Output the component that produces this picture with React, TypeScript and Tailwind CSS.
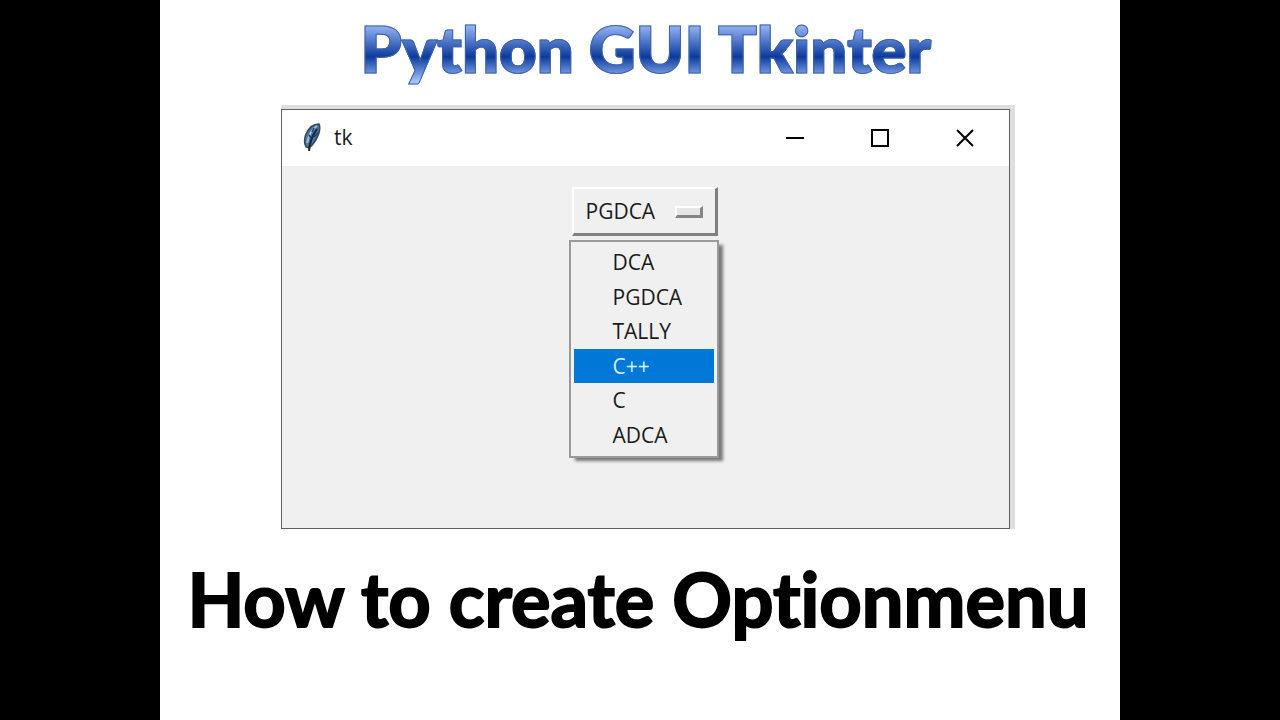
import { useState } from "react";

const courses = ["DCA", "PGDCA", "TALLY", "C++", "C", "ADCA"];

function FeatherIcon() {
  return (
    <svg width="20" height="30" viewBox="0 0 20 30" aria-hidden="true">
      <path
        d="M17 1C12 1 7 4 4 11C2 16 2 20 4 24L7 25C12 21 15 16 17 10C18 6 18 3 17 1Z"
        fill="#4674a6"
        stroke="#3a434d"
        strokeWidth="1.5"
      />
      <path d="M15 3C10 6 7 11 5 20" fill="none" stroke="#9dbddb" strokeWidth="2" />
      <path d="M15 6C11 12 8 17 7 28" fill="none" stroke="#1c242e" strokeWidth="2" />
      <path d="M12 5L10 9M16 10L12 14M7 12L9 15" stroke="#1e3f66" strokeWidth="1.5" />
    </svg>
  );
}

function TitleBar() {
  return (
    <div className="flex h-14 items-center bg-white pr-0.5 pl-5">
      <FeatherIcon />
      <span className="ml-3">tk</span>
      <div className="ml-auto flex h-full">
        <button type="button" aria-label="Minimize" className="flex w-[85px] items-center justify-center">
          <svg width="18" height="18" viewBox="0 0 18 18">
            <path d="M0 9H18" stroke="#000" strokeWidth="2" />
          </svg>
        </button>
        <button type="button" aria-label="Maximize" className="flex w-[85px] items-center justify-center">
          <svg width="18" height="18" viewBox="0 0 18 18">
            <rect x="1" y="1" width="16" height="16" fill="none" stroke="#000" strokeWidth="2" />
          </svg>
        </button>
        <button type="button" aria-label="Close" className="flex w-[85px] items-center justify-center">
          <svg width="18" height="18" viewBox="0 0 18 18">
            <path d="M1 1L17 17M17 1L1 17" stroke="#000" strokeWidth="2" />
          </svg>
        </button>
      </div>
    </div>
  );
}

function OptionMenu() {
  const [value, setValue] = useState("PGDCA");
  const [active, setActive] = useState("C++");

  return (
    <div className="relative">
      <button
        type="button"
        aria-haspopup="menu"
        aria-expanded="true"
        className="flex h-[49px] w-[146px] items-center justify-between border-t-2 border-r-3 border-b-3 border-l-2 border-t-white border-r-[#808080] border-b-[#808080] border-l-white bg-[#f0f0f0] px-3 pt-0.5"
      >
        <span>{value}</span>
        <span className="h-3 w-7 border-t-2 border-r-3 border-b-3 border-l-2 border-t-white border-r-[#858585] border-b-[#858585] border-l-white bg-[#e6e6e6]" />
      </button>

      {/* Dropdown */}
      <div
        role="menu"
        className="absolute top-[53px] -left-[3px] flex h-[218px] w-[150px] flex-col border-2 border-[#9a9a9a] bg-[#f0f0f0] px-[3px] pt-[3px] pb-1 shadow-[5px_4px_3px_-1px_rgba(0,0,0,0.5)]"
      >
        {courses.map((course) => (
          <button
            key={course}
            type="button"
            role="menuitem"
            onMouseEnter={() => setActive(course)}
            onClick={() => setValue(course)}
            className={
              course === active
                ? "flex w-full flex-1 items-center bg-[#0078d7] pt-px pl-[39px] leading-none text-[#d5f0ff]"
                : "flex w-full flex-1 items-center pt-px pl-[39px] leading-none"
            }
          >
            {course}
          </button>
        ))}
      </div>
    </div>
  );
}

export default function App() {
  return (
    <div className="flex min-h-screen justify-center bg-black">
      <main className="flex w-3/4 flex-col items-center bg-white">
        <h1 className="mt-1 ml-3 bg-linear-to-b from-[#a9c4ff] from-20% via-[#0b3a9c] via-60% to-[#a5c3ff] to-88% bg-clip-text font-['Lato'] text-[65px] leading-[88px] font-extrabold whitespace-nowrap text-transparent [-webkit-text-stroke:1px_#3f62a8]">
          Python GUI Tkinter
        </h1>

        {/* Tk window */}
        <section className="mt-[13px] ml-4 w-[734px] max-w-full border-t-4 border-r-5 border-[#dedede] font-['Open_Sans'] text-[21px] font-medium text-[#1a1a1a]">
          <div className="border border-[#606060]">
            <TitleBar />
            <div className="flex h-[362px] justify-center bg-[#f0f0f0] pt-[21px] pr-0.5">
              <OptionMenu />
            </div>
          </div>
        </section>

        <h2 className="mt-6 mr-1 font-['Lato'] text-[74px] leading-[92px] font-bold whitespace-nowrap text-black [-webkit-text-stroke:2px_#000] [font-variant-ligatures:none]">
          How to create Optionmenu
        </h2>
      </main>
    </div>
  );
}
